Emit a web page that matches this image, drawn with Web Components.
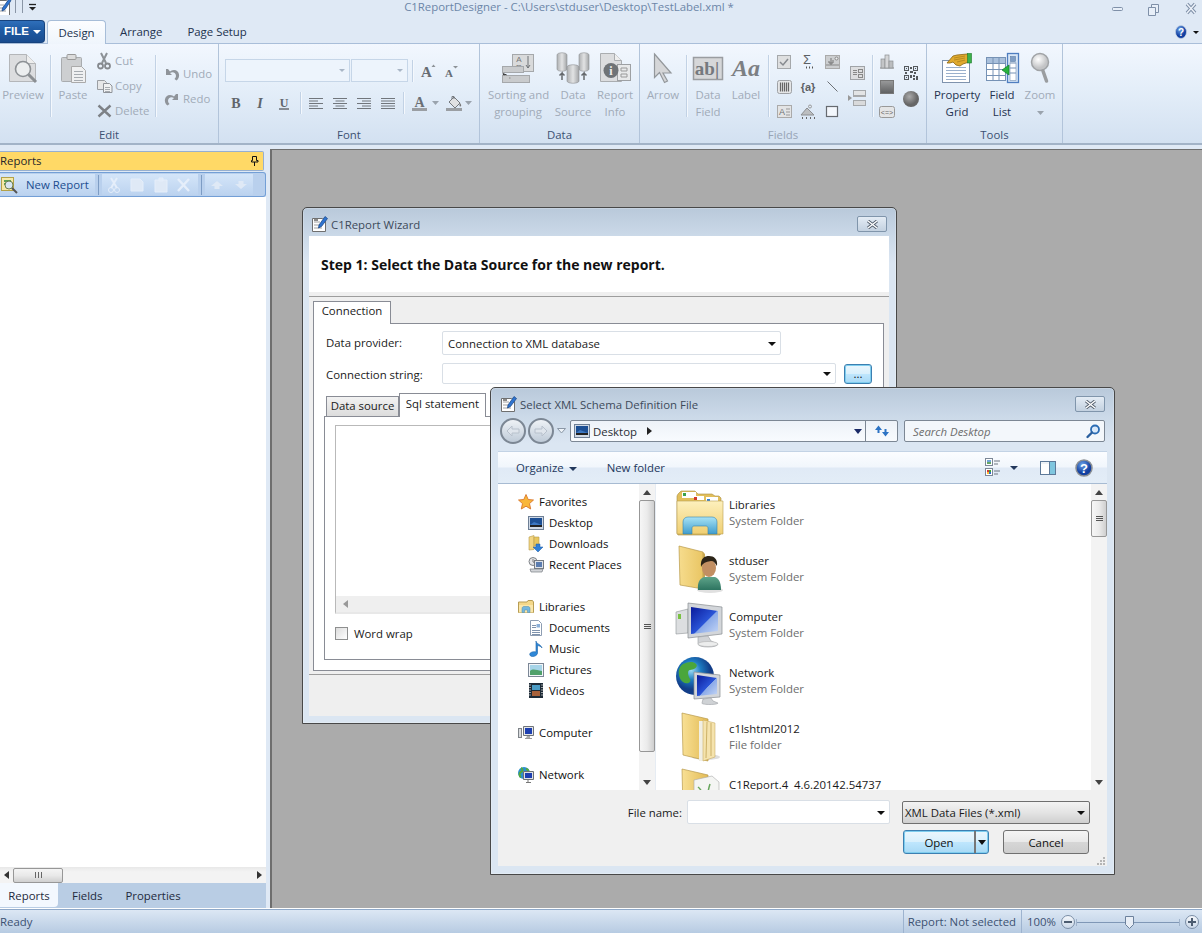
<!doctype html>
<html><head><meta charset="utf-8"><title>C1ReportDesigner</title>
<style>
html,body{margin:0;padding:0}
body{width:1202px;height:933px;overflow:hidden;background:#dfe9f5;font:11.4px/15px "Open Sans","Noto Sans",sans-serif;color:#1a1a1a}
</style></head><body>
<x-app>
  <x-titlebar>C1ReportDesigner - C:\Users\stduser\Desktop\TestLabel.xml *</x-titlebar>
  <x-tabrow></x-tabrow>
  <x-ribbon>
    <x-group w="219" label="Edit">
      <x-big w="46" icon="preview" dis>Preview</x-big>
      <x-sep style="margin-left:4px"></x-sep>
      <x-big w="44" icon="paste" dis>Paste</x-big>
      <x-col style="margin-left:2px;width:55px;margin-top:-2px">
        <x-small icon="cut" dis>Cut</x-small><x-small icon="copy" dis>Copy</x-small><x-small icon="del" dis>Delete</x-small>
      </x-col>
      <x-sep style="margin-left:3px"></x-sep>
      <x-col style="margin-left:9px;padding-top:11px">
        <x-small icon="undo" dis>Undo</x-small><x-small icon="redo" dis>Redo</x-small>
      </x-col>
    </x-group>
    <x-group w="261" label="Font">
      <x-fontgrid>
        <x-row style="height:23px;margin:14px 0 0 6px">
          <x-combo style="width:125px"></x-combo><x-combo style="width:57px;margin-left:1px"></x-combo>
          <x-sep style="margin-left:4px;height:22px;margin-top:0"></x-sep>
          <x-icon name="growa" style="margin-left:8px"></x-icon><x-icon name="shrinka" style="margin-left:9px"></x-icon>
        </x-row>
        <x-row style="height:20px;margin:11px 0 0 5px">
          <x-tool><x-icon name="b"></x-icon></x-tool><x-tool><x-icon name="i"></x-icon></x-tool><x-tool><x-icon name="u"></x-icon></x-tool>
          <x-sep style="margin-left:4px;height:22px;margin-top:0"></x-sep>
          <x-tool style="margin-left:3px"><x-icon name="al"></x-icon></x-tool><x-tool><x-icon name="ac"></x-icon></x-tool><x-tool><x-icon name="ar"></x-icon></x-tool><x-tool><x-icon name="aj"></x-icon></x-tool>
          <x-sep style="margin-left:3px;height:22px;margin-top:0"></x-sep>
          <x-icon name="colora" style="margin-left:8px"></x-icon><x-icon name="caret" style="margin-left:5px"></x-icon>
          <x-icon name="fill" style="margin-left:7px"></x-icon><x-icon name="caret" style="margin-left:3px"></x-icon>
        </x-row>
      </x-fontgrid>
    </x-group>
    <x-group w="160" label="Data">
      <x-big w="60" icon="sort" dis style="margin-left:8px">Sorting and<br>grouping</x-big>
      <x-big w="46" icon="db" dis style="margin-left:2px">Data<br>Source</x-big>
      <x-big w="38" icon="rinfo" dis>Report<br>Info</x-big>
    </x-group>
    <x-group w="287" label="Fields" dis>
      <x-big w="40" icon="arrow" dis style="margin-left:3px">Arrow</x-big>
      <x-sep style="margin-left:3px"></x-sep>
      <x-big w="42" icon="dfield" dis>Data<br>Field</x-big>
      <x-big w="34" icon="alabel" dis>Label</x-big>
      <x-sep style="margin-left:5px"></x-sep>
      <x-col style="width:24px;margin-left:3px;gap:4px;padding-top:1px"><x-cell><x-icon name="fcheck"></x-icon></x-cell><x-cell><x-icon name="fbar"></x-icon></x-cell><x-cell><x-icon name="ftext"></x-icon></x-cell></x-col>
      <x-col style="width:24px;gap:4px;padding-top:1px"><x-cell><x-icon name="fsum"></x-icon></x-cell><x-cell><x-icon name="fa"></x-icon></x-cell><x-cell><x-icon name="fmount"></x-icon></x-cell></x-col>
      <x-col style="width:24px;gap:4px;padding-top:1px"><x-cell><x-icon name="fpic"></x-icon></x-cell><x-cell><x-icon name="fline"></x-icon></x-cell><x-cell><x-icon name="frect"></x-icon></x-cell></x-col>
      <x-col style="width:24px;margin-left:1px;gap:4px;padding-top:12px"><x-cell><x-icon name="fform"></x-icon></x-cell><x-cell><x-icon name="flist"></x-icon></x-cell></x-col>
      <x-sep style="margin-left:3px"></x-sep>
      <x-col style="width:24px;margin-left:2px;gap:4px;padding-top:1px"><x-cell><x-icon name="fchart"></x-icon></x-cell><x-cell><x-icon name="fsq"></x-icon></x-cell><x-cell><x-icon name="fbox"></x-icon></x-cell></x-col>
      <x-col style="width:24px;gap:5px;padding-top:12px"><x-cell><x-icon name="fqr"></x-icon></x-cell><x-cell><x-icon name="fball"></x-icon></x-cell></x-col>
    </x-group>
    <x-group w="136" label="Tools">
      <x-big w="46" icon="propgrid" style="margin-left:7px">Property<br>Grid</x-big>
      <x-big w="40" icon="fieldlist" style="margin-left:2px">Field<br>List</x-big>
      <x-big w="40" icon="zoom" dis style="margin-left:-2px">Zoom<br><x-icon name="caret"></x-icon></x-big>
    </x-group>
  </x-ribbon>
  <x-main>
    <x-side>
      <x-paneltitle>Reports</x-paneltitle>
      <x-paneltool></x-paneltool>
      <x-blank></x-blank>
      <x-hscroll></x-hscroll>
      <x-panetabs></x-panetabs>
    </x-side>
    <x-desk>
      <x-window left="32" top="57" w="595" h="517" icon="app" title="C1Report Wizard">
        <x-wizard></x-wizard>
      </x-window>
      <x-window left="220" top="237" w="625" h="488" icon="app" title="Select XML Schema Definition File" pl="7" pb="8" pr="7">
        <x-navbar></x-navbar>
        <x-cmdbar></x-cmdbar>
        <x-browser></x-browser>
        <x-dlgfoot></x-dlgfoot>
      </x-window>
    </x-desk>
  </x-main>
  <x-status></x-status>
</x-app>
<script>
const lines=(x,y,w,n,s=3,c='#a6abb0')=>Array.from({length:n},(_,i)=>`<path d="M${x} ${y+i*s+.5}h${w}" stroke="${c}"/>`).join('');
const ICONS={
app:[17,17,`<path d="M1.5 2.5h10l3 3v10h-13z" fill="#fff" stroke="#6f6f6f"/><path d="M3 6h6M3 9h7M3 12h8" stroke="#a0a0a0"/><path d="M3 3h4v2H3z" fill="#8a8a8a"/><path d="M14 .5l2.5 2-6 8-3 1.5.5-3z" fill="#2f74d0" stroke="#14407f" stroke-width=".7"/>`],
preview:[30,30,`<path d="M1.5 1.5h17l9 9v18h-26z" fill="#dcdddf" stroke="#b4b6b9"/><path d="M18.5 1.5v9h9" fill="#eee" stroke="#b4b6b9"/><circle cx="15" cy="16" r="7.5" fill="#eceeef" stroke="#8d9195" stroke-width="1.6"/><path d="M20.5 21.500l7.500 7.500" stroke="#8b8f93" stroke-width="3"/>`],
paste:[27,30,`<rect x="1.500" y="4.500" width="20" height="24" rx="1" fill="#cdcfd1" stroke="#a9acaf"/><rect x="7" y="1.500" width="9" height="5" rx="1" fill="#dcdcdc" stroke="#999"/><path d="M11.500 13.500h10l4 4v12h-14z" fill="#eff0f1" stroke="#aaa"/>${lines(14,18,9,4,3)}`],
cut:[14,18,`<path d="M4 1l5 10M10 1L5 11" stroke="#8d9297" stroke-width="2"/><circle cx="3.500" cy="14" r="2.500" fill="none" stroke="#85898e" stroke-width="1.800"/><circle cx="10.500" cy="14" r="2.500" fill="none" stroke="#85898e" stroke-width="1.800"/>`],
copy:[16,14,`<path d="M.5 1.500h7l2 2v7h-9z" fill="#e6e7e8" stroke="#9a9ea3"/><path d="M6.500 4.500h6l2.500 2.500v6.500h-8.500z" fill="#f0f1f2" stroke="#8f9399"/>${lines(8,8,5,3,2)}`],
del:[15,14,`<path d="M1.500 1.500l12 11M13.500 1.500l-12 11" stroke="#7d8186" stroke-width="2.400"/>`],
undo:[14,14,`<path d="M1 2v6h6L5 6c3-2 6 0 6 3 0 1-.5 2-1.500 3l2 1.500c4.500-3 3-10.500-2.500-10.500-2 0-3 1-4 1.500L3 2z" fill="#8f949a"/>`],
redo:[14,14,`<path d="M13 2v6H7l2-2c-3-2-6 0-6 3 0 1 .5 2 1.500 3l-2 1.500c-4.500-3-3-10.500 2.500-10.500 2 0 3 1 4 1.500L11 2z" fill="#8f949a"/>`],
growa:[15,14,`<text x="0" y="13" font-family="Liberation Serif" font-weight="700" font-size="15" fill="#666c73">A</text><path d="M10.500 3l2-2.500 2 2.500z" fill="#8d9297"/>`],
shrinka:[13,12,`<text x="0" y="11.500" font-family="Liberation Serif" font-weight="700" font-size="11" fill="#666c73">A</text><path d="M8 1h5l-2.500 2.500z" fill="#8d9297"/>`],
b:[14,14,`<text x="7" y="12" text-anchor="middle" font-family="Liberation Serif" font-weight="700" font-size="14" fill="#60656b">B</text>`],
i:[14,14,`<text x="7" y="12" text-anchor="middle" font-family="Liberation Serif" font-style="italic" font-weight="700" font-size="14" fill="#60656b">I</text>`],
u:[14,14,`<text x="7" y="10.500" text-anchor="middle" font-family="Liberation Serif" font-weight="700" font-size="12" fill="#60656b">U</text><path d="M2 13h10" stroke="#60656b" stroke-width="1.400"/>`],
al:[14,11,[0,1,2,3,4].map(i=>`<path d="M0 ${i*2.500+.5}h${i%2?9:14}" stroke="#71767c"/>`).join('')],
ac:[14,11,[0,1,2,3,4].map(i=>`<path d="M${i%2?2.500:0} ${i*2.500+.5}h${i%2?9:14}" stroke="#71767c"/>`).join('')],
ar:[14,11,[0,1,2,3,4].map(i=>`<path d="M${i%2?5:0} ${i*2.500+.5}h${i%2?9:14}" stroke="#71767c"/>`).join('')],
aj:[14,11,[0,1,2,3,4].map(i=>`<path d="M0 ${i*2.500+.5}h14" stroke="#71767c"/>`).join('')],
colora:[15,15,`<text x="7.500" y="11" text-anchor="middle" font-family="Liberation Serif" font-weight="700" font-size="14" fill="#6a6f75">A</text><rect y="12" width="15" height="3" fill="#9a9ea3"/>`],
fill:[16,16,`<path d="M3 7l5-5 6 6-5 5z" fill="#dfe0e2" stroke="#75797e"/><path d="M6 4V1.500h2V4" fill="none" stroke="#75797e"/><path d="M14 8c1.500 2 1.500 3 .5 3.500S13 10 14 8z" fill="#777"/><rect y="13" width="16" height="3" fill="#9a9ea3"/>`],
caret:[7,4,`<path d="M0 0h7L3.500 4z" fill="#9aa3ad"/>`],
sort:[32,30,`<rect x="10.500" y="1.500" width="21" height="17" fill="#d9dadb" stroke="#a5a8ab"/><text x="17" y="9" text-anchor="middle" font-family="Liberation Sans" font-size="8" fill="#777">A</text><text x="17" y="17" text-anchor="middle" font-family="Liberation Sans" font-size="8" fill="#777">R</text><path d="M26 3v12M24 12l2 3 2-3" stroke="#6f7377" fill="none"/><rect x=".5" y="13.500" width="21" height="6" fill="#c9cbcd" stroke="#a5a8ab"/><rect x=".5" y="22.500" width="27" height="7" fill="#c9cbcd" stroke="#a5a8ab"/><path d="M1 20v2h4M7 25h2" stroke="#888" stroke-dasharray="1.500 1"/>`],
db:[32,32,`<defs><linearGradient id="d"><stop offset="0" stop-color="#aeb0b2"/><stop offset=".5" stop-color="#e2e3e4"/><stop offset="1" stop-color="#a3a5a7"/></linearGradient></defs><path d="M0 3c0-3 10-3 10 0v14c0 3-10 3-10 0z" fill="url(#d)" stroke="#8e9194" stroke-width=".6"/><path d="M22 3c0-3 10-3 10 0v14c0 3-10 3-10 0z" fill="url(#d)" stroke="#8e9194" stroke-width=".6"/><path d="M10 15c0-3 12-3 12 0v14c0 3-12 3-12 0z" fill="url(#d)" stroke="#8e9194" stroke-width=".6"/><path d="M5 28v-7l-2.500 2.500M5 21l2.500 2.500M27 28v-7l-2.500 2.500M27 21l2.500 2.500" stroke="#65696d" stroke-width="1.500" fill="none"/>`],
rinfo:[31,30,`<path d="M.5 .5h14l7 7v21H.5z" fill="#dcdddf" stroke="#aaadb0"/><path d="M14.500 .5v7h7" fill="#eee" stroke="#aaadb0"/><rect x="17.500" y="11.500" width="13" height="16" fill="#e8e9ea" stroke="#9da0a3"/><circle cx="11" cy="17.500" r="7.500" fill="#6f7377"/><text x="11" y="22" text-anchor="middle" font-family="Liberation Serif" font-weight="700" font-size="12" fill="#eee">i</text><path d="M21 15h6v3h-6zM21 21h6v3h-6z" fill="none" stroke="#999"/>`],
arrow:[20,30,`<path d="M1.500 1l16.500 19h-8l4.500 8-3 1.500-5-10-5 5z" fill="#d5d6d8" stroke="#93979b" stroke-width="1.200"/>`],
dfield:[30,23,`<rect x=".5" y=".5" width="29" height="22" fill="#d6d7d9" stroke="#9a9da1" stroke-width="1.500"/><text x="14" y="18" text-anchor="middle" font-family="Liberation Serif" font-weight="700" font-size="19" fill="#75797e">ab|</text>`],
alabel:[30,24,`<text x="15" y="20" text-anchor="middle" font-family="Liberation Serif" font-weight="700" font-style="italic" font-size="24" fill="#7c7f83">Aa</text>`],
fcheck:[14,14,`<rect x=".5" y=".5" width="13" height="13" fill="#dedfe0" stroke="#a5a8ab"/><path d="M3 7l3 3 5-6" fill="none" stroke="#868a8f" stroke-width="1.500"/>`],
fbar:[15,14,`<rect x=".5" y=".5" width="14" height="13" rx="2" fill="#e5e6e7" stroke="#9ea1a5"/><path d="M3.500 2.500v9M5.500 2.500v9M7.500 2.500v9M9.500 2.500v9M11.500 2.500v9" stroke="#666" stroke-width="1.200"/>`],
ftext:[15,13,`<rect x=".5" y=".5" width="14" height="12" fill="#e3e4e5" stroke="#aaa"/><text x="5" y="10" text-anchor="middle" font-family="Liberation Sans" font-size="9" fill="#6d7175">A</text><path d="M9 4h4M9 7h4M9 10h4" stroke="#999"/>`],
fsum:[14,15,`<text x="6" y="10" text-anchor="middle" font-family="Liberation Sans" font-size="13" fill="#5d6165">Σ</text><path d="M5 13.500h1M8 13.500h1M11 13.500h1" stroke="#555" stroke-width="2"/>`],
fa:[16,13,`<text x="8" y="10.500" text-anchor="middle" font-family="Liberation Sans" font-weight="700" font-size="11" fill="#5d6165">{a}</text>`],
fmount:[15,15,`<circle cx="9" cy="2.500" r="1.500" fill="none" stroke="#999"/><path d="M0 11l6-7 5 5 2 2z" fill="#bcbec0" stroke="#8d8f92"/><path d="M1 14h1M5 14h1M9 14h1M13 14h1" stroke="#666" stroke-width="2"/>`],
fpic:[15,14,`<rect x=".5" y=".5" width="14" height="13" fill="#ccced0" stroke="#aaa"/><path d="M1 10h13" stroke="#888"/><path d="M6 10V3M4 6v2h4V5" stroke="#777" fill="none"/><circle cx="11.500" cy="3.500" r="1.500" fill="#eee" stroke="#888"/>`],
fline:[11,11,`<path d="M.5 .5l10 10" stroke="#6c7075"/>`],
frect:[12,11,`<rect x=".5" y=".5" width="11" height="10" fill="#f3f7fc" stroke="#666a70" stroke-width="1.200"/>`],
fform:[15,14,`<rect x=".5" y=".5" width="14" height="13" fill="#dddee0" stroke="#a0a3a7"/>${lines(3,4,4,3,2,'#888')}<rect x="8.500" y="3.500" width="4" height="3" fill="none" stroke="#888"/><rect x="8.500" y="8.500" width="4" height="3" fill="none" stroke="#888"/>`],
flist:[18,16,`<rect x="5.500" y=".5" width="12" height="5" fill="#e3e4e5" stroke="#a5a8ab"/><path d="M5 6.500h13" stroke="#aaa"/><rect x="5.500" y="10.500" width="12" height="5" fill="#d9dadb" stroke="#a5a8ab"/><path d="M0 5l4 3-4 3z" fill="#999"/>`],
fchart:[16,15,`<path d="M1 14h14" stroke="#888"/><rect x="2" y="5" width="4" height="9" fill="#c3c5c7" stroke="#8c8f92" stroke-width=".7"/><rect x="6" y="1" width="4" height="13" fill="#d5d6d8" stroke="#8c8f92" stroke-width=".7"/><rect x="10" y="7" width="4" height="7" fill="#bbbdbf" stroke="#8c8f92" stroke-width=".7"/>`],
fsq:[14,14,`<defs><linearGradient id="s" x2="0" y2="1"><stop offset="0" stop-color="#9a9b9c"/><stop offset="1" stop-color="#5f6061"/></linearGradient></defs><rect x=".5" y=".5" width="13" height="13" fill="url(#s)" stroke="#777"/>`],
fbox:[16,12,`<rect x=".5" y=".5" width="15" height="11" rx="2" fill="#e4e5e6" stroke="#999"/><text x="8" y="8.500" text-anchor="middle" font-family="Liberation Sans" font-size="7" fill="#666">&lt;=&gt;</text>`],
fqr:[14,14,`<path fill="#55595d" d="M0 0h5v5H0zM9 0h5v5H9zM0 9h5v5H0zM6 1h2v2H6zM6 5h3v2H6zM10 6h2v2h-2zM1 6h2v2H1zM6 9h2v3H6zM9 9h2v2H9zM12 10h2v4h-2zM9 12h2v2H9z"/><path fill="#dfe9f5" d="M1 1h3v3H1zM10 1h3v3h-3zM1 10h3v3H1z"/><path fill="#55595d" d="M2 2h1v1H2zM11 2h1v1h-1zM2 11h1v1H2z"/>`],
fball:[16,16,`<defs><radialGradient id="b" cx=".4" cy=".35"><stop offset="0" stop-color="#aaa"/><stop offset="1" stop-color="#666"/></radialGradient></defs><circle cx="8" cy="8" r="8" fill="url(#b)"/>`],
propgrid:[30,30,`<rect x=".5" y="7.500" width="27" height="22" fill="#fff" stroke="#7f93ad"/>${lines(4,14,20,5,3,'#9ab0cc')}<path d="M5 10l6-7 4-1 10-1 2 2v6l-6 2-3 2-4-1-3-3-3 1z" fill="#e0aa2e" stroke="#8a6510" stroke-width=".8"/><path d="M12 5l11-2M12 7l11-2M15 9l8-2" stroke="#a67c18" stroke-width=".7"/><rect x="25.500" y=".5" width="4" height="9.500" fill="#3bb14a" stroke="#1d7a2b" stroke-width=".6"/>`],
fieldlist:[33,30,`<rect x=".5" y="4.500" width="19" height="23" fill="#fff" stroke="#7692b5"/><rect x="1" y="5" width="18" height="5" fill="#a9c0dc"/><path d="M7 5v23M13 5v23M1 10.500h18M1 16.500h18M1 22.500h18" stroke="#7692b5"/><rect x="21.500" y=".5" width="11" height="29" fill="#d8e6f6" stroke="#4f7ec0" stroke-width="1.300"/><rect x="24.500" y="3.500" width="5" height="5" fill="#7f9dc4" stroke="#55749c" stroke-width=".5"/><path d="M24 9.500v18h6v-18" fill="#fff" stroke="#7692b5" stroke-width=".6"/><path d="M24 10h6M24 15h6M24 20h6" stroke="#7692b5"/><path d="M16 17l7-5v10z" fill="#28b33c" stroke="#13802a" stroke-width=".7"/>`],
zoom:[19,30,`<defs><radialGradient id="z" cx=".4" cy=".35"><stop offset="0" stop-color="#fff"/><stop offset="1" stop-color="#c3c4c6"/></radialGradient></defs><ellipse cx="9" cy="9" rx="8.500" ry="8.500" fill="url(#z)" stroke="#a0a3a6" stroke-width="1.500"/><path d="M12 18l3.500 10" stroke="#9a9da0" stroke-width="3.500" stroke-linecap="round"/>`],
star:[16,16,`<path d="M8 .5l2.200 5 5.300.5-4 3.600 1.200 5.400L8 12.200 3.300 15l1.200-5.400-4-3.600 5.300-.5z" fill="#f9b73a" stroke="#d9762a" stroke-width=".9"/>`],
desktop:[16,14,`<rect x=".5" y=".5" width="15" height="13" fill="#cfd9e6" stroke="#6e7f95"/><rect x="2" y="2" width="12" height="9" fill="#1c4f94"/><rect x="2" y="9" width="12" height="2" fill="#222"/><path d="M2 9l4-3 8 3z" fill="#3c77c2"/>`],
downloads:[16,17,`<path d="M1 2l5-1.500v14L1 15z" fill="#f2d583" stroke="#b59a4c" stroke-width=".6"/><path d="M6 2h5v9H6z" fill="#e8c65e" stroke="#b59a4c" stroke-width=".6"/><path d="M8 9h4v3h3l-5 5-5-5h3z" fill="#2f7fd6" stroke="#1c5aa3" stroke-width=".5"/>`],
recent:[16,16,`<circle cx="5" cy="4.500" r="4" fill="#e3e4e6" stroke="#7f8388"/><path d="M5 2v3l2 1" stroke="#555" fill="none" stroke-width=".7"/><rect x="6.500" y="3.500" width="9" height="8" fill="#dfe3e8" stroke="#767b82"/><rect x="8" y="5" width="6" height="5" fill="#5b7db0"/><path d="M2 12h13l-1 3H3z" fill="#d2d4d8" stroke="#7a7e84" stroke-width=".7"/>`],
libsmall:[16,15,`<path d="M.5 3v10.500h15V3l-1-1.500H10L9 3z" fill="#f4d88a" stroke="#b79d54"/><path d="M1 6h14v7.500H1z" fill="#fbe7aa"/><path d="M4 13.500V10c0-2 1-2.500 2-2.500h4c1 0 2 .5 2 2.500v3.500h-2.500V11h-3v2.500z" fill="#74b7de" stroke="#4b8ab0" stroke-width=".5"/>`],
docs:[14,16,`<path d="M1.500 .5h8l3 3v12h-11z" fill="#fff" stroke="#8d9db2"/>${lines(3,5,4,2,2,'#7f93ad')}${lines(3,10,8,3,2,'#7f93ad')}<rect x="7.500" y="4" width="3.500" height="3.500" fill="#8cb0d8"/>`],
music:[14,17,`<path d="M7 1c0 3 5 3 6 7-1-2-3-2-4.500-2.500V13c0 2-2.500 3.500-5 3.500S-.500 14 2 12.500c1.500-1 3.500-1 5-.5z" fill="#2f88d8" stroke="#1a61a8" stroke-width=".6"/>`],
pictures:[16,14,`<rect x=".5" y=".5" width="15" height="13" fill="#f2f5f8" stroke="#7c8796"/><rect x="2" y="2" width="12" height="10" fill="#a6d4e8"/><path d="M2 8c3-3 6-1 12 0v4H2z" fill="#4fa06a"/>`],
videos:[14,15,`<rect width="14" height="15" fill="#1d2a36"/><rect x="3" y="2" width="8" height="5" fill="#4a9bc4"/><rect x="3" y="8" width="8" height="5" fill="#a8613a"/><path d="M1 1.500v12M13 1.500v12" stroke="#ddd" stroke-dasharray="1 1.500" stroke-width="1.300"/>`],
computer:[16,15,`<rect x=".5" y="3.500" width="3" height="9" fill="#d9dbde" stroke="#7e8388"/><path d="M5.500 1.500h10v9h-10z" fill="#e3e5e8" stroke="#6e7379"/><rect x="7" y="3" width="7" height="6" fill="#1d3fb0"/><path d="M9 11h3v2H8z" fill="#aaa"/><path d="M7 13.500h7" stroke="#999"/>`],
network:[16,16,`<circle cx="6" cy="6" r="6" fill="#2d8fce"/><path d="M3 1c2 1 2 3 0 4S1 9 3 10M8 2c2 0 3 2 2 4" stroke="#53a83f" stroke-width="2" fill="none"/><path d="M5.500 4.500h10v8h-10z" fill="#dfe2e6" stroke="#6b7076"/><rect x="7" y="6" width="7" height="5" fill="#1d3fb0"/><path d="M10 13v2M8 15.500h5" stroke="#777"/>`],
big_lib:[48,48,`<defs><linearGradient id="y" x2="0" y2="1"><stop offset="0" stop-color="#fdf0bd"/><stop offset="1" stop-color="#f0cf72"/></linearGradient><linearGradient id="bl" x2="0" y2="1"><stop offset="0" stop-color="#a8e3f5"/><stop offset="1" stop-color="#3f9ccd"/></linearGradient></defs><path d="M2 5l3-3h14l3 3h14l3 2h4l2 2v35l-1 2H2l-1-2V7z" fill="#e2bf5c" stroke="#a98f45" stroke-width=".6"/><rect x="6" y="3" width="14" height="6" fill="#fff"/><rect x="7" y="4" width="3" height="3" fill="#3aa24a"/><rect x="18" y="7" width="10" height="4" fill="#fff"/><rect x="18" y="8" width="3" height="3" fill="#d23a2a"/><rect x="30" y="8" width="12" height="6" fill="#fff"/><rect x="31" y="10" width="3" height="3" fill="#2f7fd6"/><path d="M1 12h46v33H1z" fill="url(#y)" stroke="#b89d52" stroke-width=".6"/><path d="M7 45V33c0-3 2-5 5-5h24c3 0 5 2 5 5v12H32v-6c0-1-1-2-2-2H18c-1 0-2 1-2 2v6z" fill="url(#bl)" stroke="#3b84ad" stroke-width=".6"/>`],
big_user:[48,48,`<defs><linearGradient id="y"><stop offset="0" stop-color="#f6dc8d"/><stop offset="1" stop-color="#e9c563"/></linearGradient><linearGradient id="g" x2="0" y2="1"><stop offset="0" stop-color="#5ea389"/><stop offset="1" stop-color="#2d7460"/></linearGradient></defs><path d="M3 1l24 6v37L4 40z" fill="url(#y)" stroke="#b8994a" stroke-width=".7"/><path d="M27 7l2 2v35h-2z" fill="#c7a651"/><ellipse cx="34" cy="45" rx="13" ry="3" fill="#ccc" opacity=".6"/><path d="M22 45c-1-9 3-12 6-13h11c3 1 6 4 6 13z" fill="url(#g)"/><ellipse cx="33" cy="23" rx="7" ry="9" fill="#c28f62"/><path d="M25 22c-1-9 4-11 8-11 5 0 9 3 8 10-2-3-3-5-6-5-3 1-7 0-10 6z" fill="#2c2418"/>`],
big_comp:[48,48,`<defs><linearGradient id="s" x1="0" y1="0" x2="1" y2="1"><stop offset="0" stop-color="#0a1a9a"/><stop offset=".55" stop-color="#2a55d8"/><stop offset=".56" stop-color="#8aa9e8"/><stop offset="1" stop-color="#c4d6f5"/></linearGradient></defs><path d="M0 11l12-3v24l-12 1z" fill="#dcdee0" stroke="#8f9397" stroke-width=".6"/><rect x="2" y="13" width="3" height="5" fill="#7ac142"/><path d="M12 2l34 4v27l-34 4z" fill="#d3d6da" stroke="#888c91" stroke-width=".7"/><path d="M15 6l27 4v20l-27 3z" fill="url(#s)"/><path d="M22 36l10-1 3 5 7 3c0 4-20 4-20 0z" fill="#d1d3d6" stroke="#9a9ea2" stroke-width=".6"/><ellipse cx="32" cy="43" rx="10" ry="2.500" fill="#eceded" stroke="#aaa" stroke-width=".5"/>`],
big_net:[48,48,`<defs><radialGradient id="g" cx=".4" cy=".35"><stop offset="0" stop-color="#9cdcf2"/><stop offset=".5" stop-color="#1d7cc2"/><stop offset="1" stop-color="#123d88"/></radialGradient><linearGradient id="s" x1="0" y1="0" x2="1" y2="1"><stop offset="0" stop-color="#0a1a9a"/><stop offset=".55" stop-color="#2a55d8"/><stop offset=".56" stop-color="#8aa9e8"/><stop offset="1" stop-color="#c4d6f5"/></linearGradient></defs><circle cx="19" cy="19" r="19" fill="url(#g)"/><path d="M7 7c5-2 10-3 13 0s-3 6-6 6-2 6 0 9-3 6-7 3S0 12 7 7zM22 28c3-2 5 0 4 3s-4 5-6 4 0-5 2-7z" fill="#4aa63c"/><path d="M18 15l26 3v22l-26 2z" fill="#d3d6da" stroke="#888c91" stroke-width=".7"/><path d="M21 18l20 3v16l-20 2z" fill="url(#s)"/><path d="M27 42l8-1 2 3 5 2c0 2-17 2-16 0z" fill="#cfd2d5" stroke="#9a9ea2" stroke-width=".6"/>`],
big_folder:[48,48,`<defs><linearGradient id="y"><stop offset="0" stop-color="#f8e095"/><stop offset="1" stop-color="#e3bb55"/></linearGradient></defs><ellipse cx="30" cy="44" rx="14" ry="3" fill="#ddd"/><path d="M6 0l26 6v42L7 42z" fill="url(#y)" stroke="#b8994a" stroke-width=".7"/><path d="M23 8h4v40h-4z" fill="#f1efe4"/><path d="M27 7l12 3v34l-12 4z" fill="#f5e3ad" stroke="#c0a355" stroke-width=".5"/><path d="M31 9l-1 36M35 10v33" stroke="#c0a355" stroke-width=".8"/>`],
big_folder2:[48,48,`<defs><linearGradient id="y"><stop offset="0" stop-color="#f8e095"/><stop offset="1" stop-color="#e3bb55"/></linearGradient></defs><path d="M6 0l26 6v42L7 42z" fill="url(#y)" stroke="#b8994a" stroke-width=".7"/><path d="M18 11l18-4 7 6v24l-25 6z" fill="#f4f5f3" stroke="#aaa" stroke-width=".6"/><path d="M22 18c4 3 6 8 8 18M34 15c-2 6-3 12-2 20" stroke="#67a65c" stroke-width="1.500" fill="none"/>`],
search:[14,15,`<circle cx="9" cy="5.500" r="4" fill="#dbeafa" stroke="#2a6cb4" stroke-width="1.800"/><path d="M6 8.500L1.500 13" stroke="#2a5f9e" stroke-width="2.400" stroke-linecap="round"/>`],
views:[16,20,`<rect x=".5" y=".5" width="7" height="7" fill="#fff" stroke="#7c8796"/><rect x="2" y="2" width="4" height="2" fill="#70a5d8"/><rect x="2" y="4" width="4" height="2" fill="#63a566"/><rect x=".5" y="10.500" width="7" height="7" fill="#fff" stroke="#7c8796"/><path d="M2 12h2v2H2z" fill="#d33"/><path d="M4 12h2v2H4z" fill="#3a3"/><path d="M2 14h2v2H2z" fill="#fb3"/><path d="M4 14h2v2H4z" fill="#36c"/><path d="M9 3h6M9 6h4M9 13h6M9 16h4" stroke="#6f7782" stroke-width="1.200"/>`],
panes:[16,14,`<rect x=".5" y=".5" width="15" height="13" fill="#fff" stroke="#5d7999"/><rect x="10" y="1" width="5" height="12" fill="#7fc6df"/><path d="M9.500 1v12" stroke="#5d7999"/><path d="M1 1h8v2H1z" fill="#eef2f6"/>`],
help:[18,18,`<defs><radialGradient id="h" cx=".4" cy=".3"><stop offset="0" stop-color="#6da4e8"/><stop offset="1" stop-color="#123fa0"/></radialGradient></defs><circle cx="9" cy="9" r="8" fill="url(#h)" stroke="#8b8f94" stroke-width="1.500"/><text x="9" y="13.500" text-anchor="middle" font-family="Liberation Sans" font-weight="700" font-size="13" fill="#fff">?</text>`],
helps:[12,14,`<defs><radialGradient id="h" cx=".4" cy=".3"><stop offset="0" stop-color="#6da4e8"/><stop offset="1" stop-color="#123fa0"/></radialGradient></defs><ellipse cx="6" cy="7" rx="5.500" ry="6.500" fill="url(#h)" stroke="#c6d2e4" stroke-width=".7"/><text x="6" y="11" text-anchor="middle" font-family="Liberation Sans" font-weight="700" font-size="10" fill="#fff">?</text>`],
newrep:[17,16,`<rect x=".5" y=".5" width="12" height="13" fill="#f6e9a8" stroke="#b3a149"/><path d="M3 4h7M3 7h5" stroke="#2e8a3a" stroke-width="1.400"/><circle cx="8" cy="8" r="4" fill="#d8e6f2" stroke="#6b7f50"/><path d="M11 11l5 5" stroke="#555" stroke-width="2"/>`],
refresh:[16,14,`<path d="M1 6l3.500-4.500L8 6H5.500v3h-2V6z" fill="#2c73c4"/><path d="M8 8l3.500 4.500L15 8h-2.500V5h-2v3z" fill="#2c73c4"/>`]
};
function el(name,css,html,init){
  customElements.define(name,class extends HTMLElement{
    constructor(){super();this.attachShadow({mode:'open'}).innerHTML=`<style>${css}</style>${html}`}
    connectedCallback(){if(init)init.call(this,this.shadowRoot)}
  });
}
el('x-icon',':host{display:inline-block;line-height:0;vertical-align:middle;flex:none}svg{display:block;overflow:visible}','',function(r){
  const I=ICONS[this.getAttribute('name')];
  if(!I||r.querySelector('svg'))return;
  r.innerHTML+=`<svg xmlns="http://www.w3.org/2000/svg" width="${I[0]}" height="${I[1]}" viewBox="0 0 ${I[0]} ${I[1]}">${I[2]}</svg>`;
});
const ic=n=>`<x-icon name="${n}"></x-icon>`;
el('x-app',':host{display:flex;flex-direction:column;width:1202px;height:933px;overflow:hidden}','<slot></slot>');
el('x-titlebar',`:host{display:flex;height:20px;align-items:flex-start;color:#6c86a8;font-size:11.4px}
.q{width:60px;display:flex;align-items:flex-start;height:15px;overflow:hidden;position:relative}
.t{flex:1;text-align:center;margin-top:-1px}
.c{width:124px;display:flex;padding:2px 0 0 33px;box-sizing:border-box}`,
`<div class="q"><svg width="40" height="15" style="flex:none"><g transform="translate(-5 -2)"><path d="M1.500 2.500h10l3 3v12h-13z" fill="#fff" stroke="#6f6f6f"/><path d="M3 7h6M3 10h7M3 13h8" stroke="#a0a0a0"/><path d="M14 1l2 1.500-6 9-3 1.500.5-3z" fill="#2f74d0" stroke="#14407f" stroke-width=".7"/></g><path d="M15.500 0v13M22.500 0v13" stroke="#8a96a6"/><path d="M29 4.500h7" stroke="#222" stroke-width="1.300"/><path d="M29 7h7l-3.500 3.500z" fill="#222"/></svg></div>
<div class="t"><slot></slot></div>
<div class="c"><svg width="91" height="15"><rect x="1.500" y="5.500" width="10" height="3" rx="1" fill="#e8eff8" stroke="#7f90a8"/><path d="M37.500 5.500h7v8h-7zM40.500 5.500v-3h7v8h-3" fill="#e8eff8" stroke="#7f90a8"/><path d="M76 2l8 9M84 2l-8 9" stroke="#7f90a8" stroke-width="3.400"/><path d="M76 2l8 9M84 2l-8 9" stroke="#eef3fa" stroke-width="1.400"/></svg></div>`);
el('x-tabrow',`:host{display:flex;height:24px;align-items:stretch;position:relative;z-index:1;color:#22324e;font-size:11.4px}
.f{width:45px;box-sizing:border-box;height:23px;background:linear-gradient(#2f6fba,#1e5aa3 45%,#1a4c8e);border:1px solid #17437e;border-left:0;border-radius:0 4px 4px 0;color:#fff;font-weight:700;font-family:"Liberation Sans",sans-serif;font-size:11.5px;display:flex;align-items:center;padding-left:4px;gap:4px}
.f i{border:4px solid transparent;border-top-color:#fff;border-bottom:0;width:0;height:0}
.d{margin-left:2px;width:59px;box-sizing:border-box;background:linear-gradient(#fcfdff,#eff5fc);border:1px solid #a7bdd8;border-bottom:0;border-radius:4px 4px 0 0;text-align:center;line-height:24px}
.n{margin-left:14px;line-height:24px}
.h{margin-left:auto;display:flex;align-items:center;gap:4px;padding:0 3px 0 0}
.h b{border:3px solid transparent;border-top-color:#111;border-bottom:0;width:0;height:0;margin-left:2px}`,
`<div class="f">FILE<i></i></div><div class="d">Design</div><div class="n">Arrange</div><div class="n" style="margin-left:25px">Page Setup</div><div class="h">${ic('helps')}<b></b></div>`);
el('x-ribbon',':host{display:flex;height:102px;box-sizing:border-box;background:linear-gradient(#f2f7fe,#e4eef9 45%,#d3e1f1);border-top:1px solid #a9bed9;border-bottom:2px solid #a2b3c7;margin-top:-1px}','<slot></slot>');
el('x-group',`:host{display:flex;flex-direction:column;box-sizing:border-box;border-right:1px solid #b2c4da;height:99px;flex:none}
.c{display:flex;height:76px;padding-top:6px;box-sizing:content-box;align-items:flex-start}
.l{text-align:center;height:17px;line-height:17px;color:#3c5172;margin-top:0}
:host([dis]) .l{color:#98a5b6}`,`<div class="c"><slot></slot></div><div class="l"></div>`,
function(r){this.style.width=this.getAttribute('w')+'px';r.querySelector('.l').textContent=this.getAttribute('label')});
el('x-big',`:host{display:block;text-align:center;flex:none;color:#24324f;line-height:17px}
:host([dis]){color:#a1abb8}
.i{height:36px;display:flex;align-items:center;justify-content:center}.t{white-space:nowrap}`,`<div class="i"></div><div class="t"><slot></slot></div>`,
function(r){this.style.width=this.getAttribute('w')+'px';r.querySelector('.i').innerHTML=ic(this.getAttribute('icon'))});
el('x-sep',':host{display:block;width:1px;height:62px;background:#c2d2e5;flex:none;margin-top:5px;box-shadow:1px 0 0 #f4f8fd}','');
el('x-col',':host{display:flex;flex-direction:column;flex:none}','<slot></slot>');
el('x-small',`:host{display:flex;align-items:center;height:25px;color:#24324f;flex:none}
:host([dis]){color:#a1abb8}.i{width:18px;display:flex;justify-content:flex-start}`,`<div class="i"></div><slot></slot>`,
function(r){r.querySelector('.i').innerHTML=ic(this.getAttribute('icon'))});
el('x-fontgrid',':host{display:block;margin-top:-5px}','<slot></slot>');
el('x-row',':host{display:flex;align-items:center}','<slot></slot>');
el('x-combo',`:host{display:flex;height:23px;box-sizing:border-box;background:#edf4fc;border:1px solid #c6d6e8;align-items:center;justify-content:flex-end;padding-right:4px;flex:none}
i{border:3.500px solid transparent;border-top-color:#a9b6c6;border-bottom:0;width:0;height:0}`,'<i></i>');
el('x-tool',':host{display:flex;width:24px;justify-content:center;align-items:center;flex:none}','<slot></slot>');
el('x-cell',':host{display:flex;height:21px;align-items:center;justify-content:center}','<slot></slot>');
el('x-main',':host{display:flex;flex:1;min-height:0}','<slot></slot>');
el('x-side',':host{display:flex;flex-direction:column;width:270px;flex:none;box-sizing:border-box;padding:6px 4px 0 0;background:#dfe9f5}','<slot></slot>');
el('x-paneltitle',`:host{display:flex;height:20px;box-sizing:border-box;align-items:center;justify-content:space-between;margin-right:2px;background:#ffd966;border:1px solid #96afd0;border-left:0;border-radius:0 2px 2px 0;color:#26262a;padding:0 4px 2px 0}`,
`<slot></slot><svg width="9" height="11"><path d="M2.500 1.500h4v4h1.500v1.500h-6.500v-1.500h1zM4.500 7v4" stroke="#111" fill="none"/></svg>`);
el('x-paneltool',`:host{display:flex;height:25px;box-sizing:border-box;margin-top:1px;align-items:center;background:#b9d0ed;border:1px solid #739fd6;border-left:0;border-radius:0 3px 3px 0;color:#214d90}
.a{height:21px;display:flex;align-items:center;background:linear-gradient(#d4e5f9,#bcd3ef)}
.s{width:1px;height:20px;background:#7d9cc4;margin:0 3px}`,
`<div class="a" style="width:95px;padding-left:1px;box-sizing:border-box">${ic('newrep')}<span style="margin-left:8px">New Report</span></div><div class="s"></div>
<div class="a" style="width:96px"><svg width="96" height="20"><g stroke="#e5eefa" fill="#dfe9f6"><path d="M9 3l6 10M15 3L9 13" stroke-width="2" fill="none"/><circle cx="9" cy="15" r="2.500" fill="none"/><circle cx="15" cy="15" r="2.500" fill="none"/><path d="M29 4h9l3 3v9H29zM53 5h12v12H53zM57 3h4v3h-4z"/><path d="M76 4l11 12M87 4L76 16" stroke-width="2.400"/></g></svg></div><div class="s"></div>
<div class="a" style="width:48px"><svg width="48" height="20"><path d="M6 11l6-5 6 5h-3.500v3h-5v-3zM30 9l6 5 6-5h-3.500V6h-5v3z" fill="#dfe9f6"/></svg></div>`);
el('x-blank',':host{display:block;flex:1;background:#fff}','');
el('x-hscroll',`:host{display:flex;height:16px;background:linear-gradient(#e8e8e8,#f3f3f3 30%,#f3f3f3);align-items:center;flex:none}
.l,.r{width:13px;display:flex;justify-content:center}.t{width:50px;height:15px;box-sizing:border-box;border:1px solid #979797;border-radius:2px;background:linear-gradient(#f4f4f4,#e9e9e9 50%,#cfcfcf);display:flex;justify-content:center;align-items:center}.m{flex:1}
.t i{width:1px;height:6px;background:#666;margin:0 1px;display:block}`,
`<div class="l"><svg width="5" height="8"><path d="M5 0v8L0 4z" fill="#333"/></svg></div><div class="t"><i></i><i></i><i></i></div><div class="m"></div><div class="r"><svg width="5" height="8"><path d="M0 0v8l5-4z" fill="#333"/></svg></div>`);
el('x-panetabs',`:host{display:flex;height:25px;background:#b9cde4;color:#1e2a3c;line-height:26px;flex:none}
.a{width:58px;height:24px;background:#f3f8fe;border-radius:0 0 4px 0;text-align:center;box-sizing:border-box}
.b{margin-left:14px}`,`<div class="a">Reports</div><div class="b">Fields</div><div class="b" style="margin-left:23px">Properties</div>`);
el('x-desk',':host{display:block;flex:1;position:relative;background:#ababab;border-top:1px solid #6e6e6e;border-left:2px solid #6e6e6e;box-sizing:border-box;margin-top:4px}','<slot></slot>');
el('x-window',`:host{display:flex;flex-direction:column;position:absolute;box-sizing:border-box;border:1px solid #484848;border-radius:5px 5px 0 0;background:linear-gradient(#b9c9da,#cbd9e8 28px,#dbe6f2 55px);box-shadow:0 0 0 1px rgba(255,255,255,.2) inset}
.h{height:28px;display:flex;align-items:center;padding:4px 0 0 2px;color:#3d4a5a;flex:none;box-sizing:border-box}
.n{margin-left:3px;white-space:nowrap}
.x{margin-left:auto;width:30px;height:16px;box-sizing:border-box;border:1px solid #8095ab;border-radius:2px;background:linear-gradient(#e4ecf5,#c3d1e0);display:flex;align-items:center;justify-content:center;margin-right:2px}`,
`<div class="h"><span class="i"></span><span class="n"></span><span class="x"><svg width="11" height="9"><path d="M1 1l9 7M10 1l-9 7" stroke="#55606e" stroke-width="3.200"/><path d="M1 1l9 7M10 1l-9 7" stroke="#fff" stroke-width="1.400"/></svg></span></div><slot></slot>`,
function(r){const a=k=>this.getAttribute(k);Object.assign(this.style,{left:(+a('left')-2)+'px',top:a('top')+'px',width:a('w')+'px',height:a('h')+'px',paddingLeft:(a('pl')||6)+'px',paddingRight:(a('pr')||7)+'px',paddingBottom:(a('pb')||7)+'px'});
r.querySelector('.i').innerHTML=ic(a('icon'));r.querySelector('.n').textContent=a('title');this.removeAttribute('title')});
el('x-select',`:host{display:flex;align-items:center;box-sizing:border-box;background:#fff;border:1px solid #d9dfe6;border-radius:2px;padding:0 4px 0 5px;flex:none}
:host([gray]){background:linear-gradient(#f3f3f3,#e4e4e4 50%,#cfcfcf);border:1px solid #6f6f6f}
s{margin-left:auto;border:4px solid transparent;border-top:4.500px solid #111;border-bottom:0;width:0;height:0;margin-top:2px}`,`<slot></slot><s></s>`);
el('x-btn',`:host{display:flex;align-items:center;justify-content:center;box-sizing:border-box;border:1px solid #707070;border-radius:3px;background:linear-gradient(#f4f4f4,#e9e9e9 48%,#d6d6d6 52%,#cdcdcd);flex:none;color:#111}
:host([def]){border:1px solid #3c7fb1;box-shadow:inset 0 0 0 1px #7ecdee;background:linear-gradient(#eaf6fd,#d9f0fc 48%,#bee6fd 52%,#a7d9f5)}`,'<slot></slot>');
el('x-wizard',`:host{display:flex;flex-direction:column;flex:1;background:#efefef;min-height:0}
.hd{height:56px;background:#fff;display:flex;align-items:center;padding-left:12px;font-weight:700;font-size:14px;color:#111;flex:none;box-sizing:border-box}
.ln{height:1px;background:#9d9d9d;margin-top:4px;flex:none}
.tabs{height:26px;display:flex;align-items:flex-end;padding-left:4px;flex:none}
.tab{width:78px;height:23px;box-sizing:border-box;background:#fff;border:1px solid #898c95;border-bottom:0;text-align:center;line-height:18px;position:relative;z-index:1;margin-bottom:-1px}
.pan{flex:none;height:348px;margin:0 5px 0 4px;background:#fff;border:1px solid #898c95;padding:7px 11px 0 10px;box-sizing:border-box;position:relative}
.rw{display:flex;align-items:center}
.lb{width:118px;padding-left:2px;box-sizing:border-box;flex:none}
.it{display:flex;align-items:flex-end;height:22px;margin-top:10px;padding-left:2px}
.it div{box-sizing:border-box;border:1px solid #898c95;text-align:center}
.a{width:73px;height:20px;background:linear-gradient(#f2f2f2,#dcdcdc);border-bottom:0!important;line-height:17px}
.b{width:87px;height:24px;background:#fff;border-bottom:0!important;margin-bottom:-1px;position:relative;z-index:1;line-height:20px}
.ip{height:244px;border:1px solid #898c95;width:570px;box-sizing:border-box;padding:8px 0 0 10px}
.tx{height:189px;border:1px solid #b9b9b9;border-right:0;border-bottom:2px solid #e8e8e8;box-sizing:border-box;display:flex;flex-direction:column;justify-content:flex-end}
.sb{height:16px;background:#efefef;padding-left:7px;display:flex;align-items:center}
.cb{display:flex;align-items:center;margin-top:12px}
.ck{width:13px;height:13px;box-sizing:border-box;border:1px solid #8e8f8f;background:linear-gradient(135deg,#dcdcdc,#fff);margin-right:6px}`,
`<div class="hd">Step 1: Select the Data Source for the new report.</div><div class="ln"></div>
<div class="tabs"><div class="tab">Connection</div></div>
<div class="pan">
  <div class="rw"><div class="lb" style="padding-bottom:2px">Data provider:</div><x-select style="width:339px;height:24px">Connection to XML database</x-select></div>
  <div class="rw" style="margin-top:7px"><div class="lb" style="padding-top:2px">Connection string:</div><x-select style="width:394px;height:21px"></x-select><x-btn def style="width:28px;height:20px;margin:2px 0 0 8px;line-height:20px">...</x-btn></div>
  <div class="it"><div class="a">Data source</div><div class="b">Sql statement</div></div>
  <div class="ip"><div class="tx"><div class="sb"><svg width="5" height="8"><path d="M5 0v8L0 4z" fill="#999"/></svg></div></div>
  <div class="cb"><div class="ck"></div>Word wrap</div></div>
</div>
<div style="height:3px;flex:none"></div><div style="height:1px;background:#9d9d9d;flex:none"></div>`);
el('x-navbar',`:host{display:flex;height:35px;align-items:flex-start;padding-top:4px;box-sizing:border-box;flex:none}
.ci{width:26px;height:26px;box-sizing:border-box;border-radius:50%;border:2px solid #7c8794;background:linear-gradient(#eef2f6,#bfcbd8);display:flex;align-items:center;justify-content:center;margin-top:-2px;flex:none}
.ad{margin-left:4px;width:328px;height:22px;box-sizing:border-box;border:1px solid #7c8794;border-radius:2px;background:linear-gradient(#edf2f8,#f8fbfe);display:flex;align-items:center;padding:0 0 0 3px;color:#2a2f36}
.se{margin-left:6px;width:201px;height:22px;box-sizing:border-box;border:1px solid #7c8794;border-radius:2px;background:#f3f7fb;display:flex;align-items:center;padding:0 4px 0 8px;font-style:italic;color:#6d6d6d;justify-content:space-between}
.rf{border-left:1px solid #7c8794;height:100%;width:31px;display:flex;align-items:center;justify-content:center}`,
`<div class="ci" style="margin-left:2px"><svg width="14" height="12"><path d="M1 6l5-5v3h7v4H6v3z" fill="#dfe5ec" stroke="#b8c1cc"/></svg></div>
<div class="ci" style="margin-left:2px"><svg width="14" height="12"><path d="M13 6L8 1v3H1v4h7v3z" fill="#dfe5ec" stroke="#b8c1cc"/></svg></div>
<svg width="9" height="6" style="margin:8px 0 0 3px;flex:none"><path d="M.5.5h8L4.500 5z" fill="#eef3f8" stroke="#8a97a6"/></svg>
<div class="ad">${ic('desktop')}<span style="margin-left:3px">Desktop</span><svg width="5" height="8" style="margin-left:10px"><path d="M0 0v8l5-4z" fill="#222"/></svg>
<svg width="8" height="5" style="margin-left:auto;margin-right:3px"><path d="M0 0h8L4 5z" fill="#1a2a66"/></svg><div class="rf">${ic('refresh')}</div></div>
<div class="se">Search Desktop${ic('search')}</div>`);
el('x-cmdbar',`:host{display:flex;height:33px;box-sizing:border-box;flex:none;align-items:center;border-top:1px solid #c3d3e5;border-bottom:1px solid #a7bbd2;background:linear-gradient(#fbfdff,#f1f6fc 48%,#e0eaf6 52%,#e3edf7);padding-left:18px;color:#23385c}
i{border:4px solid transparent;border-top:4.500px solid #23385c;border-bottom:0;width:0;height:0;display:inline-block;margin-left:5px;vertical-align:1px}`,
`<span>Organize<i></i></span><span style="margin-left:30px">New folder</span><span style="margin-left:320px;display:flex;align-items:center">${ic('views')}<i style="margin-left:9px"></i></span><span style="margin-left:22px">${ic('panes')}</span><span style="margin-left:19px">${ic('help')}</span>`);
el('x-vscroll',`:host{display:flex;flex-direction:column;width:16px;flex:none;background:#f3f3f3;height:306px;box-sizing:border-box;overflow:hidden}
.u{height:16px;display:flex;align-items:center;justify-content:center;flex:none}
.t{box-sizing:border-box;width:16px;border:1px solid #979797;border-radius:2px;background:linear-gradient(90deg,#f6f6f6,#ebebeb 50%,#cfcfcf);display:flex;flex-direction:column;justify-content:center;align-items:center;gap:1px;flex:none}
.t i{width:7px;height:1px;background:#555}.m{flex:1}`,
`<div class="u"><svg width="8" height="5"><path d="M4 0l4 5H0z" fill="#444"/></svg></div><div class="t"><i></i><i></i><i></i></div><div class="m"></div><div class="u"><svg width="8" height="5"><path d="M0 0h8L4 5z" fill="#444"/></svg></div>`,
function(r){r.querySelector('.t').style.height=this.getAttribute('thumb')+'px'});
el('x-nav',`:host{display:flex;align-items:center;height:21px;color:#111;white-space:nowrap}
:host([top]) .i{margin-left:20px}.i{margin-left:30px;width:16px;display:flex;justify-content:center;flex:none;margin-right:5px}`,`<div class="i"></div><slot></slot>`,
function(r){r.querySelector('.i').innerHTML=ic(this.getAttribute('icon'))});
el('x-file',`:host{display:flex;align-items:center;height:56px;padding-left:20px;flex:none}
:host([last]){align-items:flex-start;height:25px;overflow:hidden}
:host([last]) .i{margin-top:4px}
:host([last]) .t{line-height:8px;margin-top:16px}
.i{width:48px;height:48px;flex:none}.t{margin-left:5px;line-height:16px;white-space:nowrap}.s{color:#6d6d6d}`,
`<div class="i"></div><div class="t"><div><slot></slot></div><div class="s"></div></div>`,
function(r){r.querySelector('.i').innerHTML=ic(this.getAttribute('icon'));const s=r.querySelector('.s');if(this.hasAttribute('sub'))s.textContent=this.getAttribute('sub')});
el('x-browser',`:host{display:flex;height:306px;background:#fff;flex:none;overflow:hidden}
.nav{width:141px;padding-top:7px;box-sizing:border-box;flex:none;overflow:hidden}
.g{height:21px}.ls{flex:1;overflow:hidden;padding-top:1px;border-left:1px solid #e6ecf3;box-sizing:border-box}`,
`<div class="nav">
<x-nav top icon="star">Favorites</x-nav><x-nav icon="desktop">Desktop</x-nav><x-nav icon="downloads">Downloads</x-nav><x-nav icon="recent">Recent Places</x-nav><div class="g"></div>
<x-nav top icon="libsmall">Libraries</x-nav><x-nav icon="docs">Documents</x-nav><x-nav icon="music">Music</x-nav><x-nav icon="pictures">Pictures</x-nav><x-nav icon="videos">Videos</x-nav><div class="g"></div>
<x-nav top icon="computer">Computer</x-nav><div class="g"></div><x-nav top icon="network">Network</x-nav>
</div><x-vscroll thumb="252"></x-vscroll>
<div class="ls">
<x-file icon="big_lib" sub="System Folder">Libraries</x-file><x-file icon="big_user" sub="System Folder">stduser</x-file><x-file icon="big_comp" sub="System Folder">Computer</x-file><x-file icon="big_net" sub="System Folder">Network</x-file><x-file icon="big_folder" sub="File folder">c1lshtml2012</x-file><x-file icon="big_folder2" last>C1Report.4&nbsp; 4.6.20142.54737</x-file>
</div><x-vscroll thumb="37"></x-vscroll>`);
el('x-dlgfoot',`:host{display:flex;flex-direction:column;flex:1;background:#f0f0f0;position:relative;padding:10px 17px 0 0;box-sizing:border-box}
.r{display:flex;justify-content:flex-end;align-items:center}
.gr{position:absolute;right:2px;bottom:0;width:10px;height:10px}`,
`<div class="r" style="height:24px"><span style="margin-right:5px">File name:</span><x-select style="width:203px;height:24px"></x-select><x-select gray style="width:188px;height:23px;margin-left:12px;padding-left:2px">XML Data Files (*.xml)</x-select></div>
<div class="r" style="margin-top:6px;padding-right:1px"><x-btn def style="width:86px;height:24px"><span style="flex:1;text-align:center">Open</span><span style="width:2px;height:22px;background:#777"></span><span style="width:12px;display:flex;justify-content:center"><svg width="8" height="5" style="display:block"><path d="M0 0h8L4 5z" fill="#111"/></svg></span></x-btn><x-btn style="width:86px;height:24px;margin-left:14px">Cancel</x-btn></div>
<svg class="gr"><path d="M8 1h2v2H8zM5 4h2v2H5zM8 4h2v2H8zM2 7h2v2H2zM5 7h2v2H5zM8 7h2v2H8z" fill="#b5b5b5"/></svg>`);
el('x-status',`:host{display:flex;height:25px;flex:none;box-sizing:border-box;border-top:1px solid #fff;align-items:center;color:#3c5172;background:linear-gradient(#8fa9c9 0,#8fa9c9 1px,#dce7f4 1px,#b7cbe2);white-space:nowrap;padding-top:1px}
.s{width:1px;height:24px;background:#9db3cf}
.c{border-radius:50%;width:14px;height:14px;box-sizing:border-box;border:1px solid #7b8ea6;background:linear-gradient(#f4f7fb,#cbd8e8);display:flex;align-items:center;justify-content:center;flex:none}
.sl{width:110px;height:14px;flex:none}`,
`<span style="margin-right:auto">Ready</span><div class="s"></div><span style="margin:0 5px 0 4px">Report: Not selected</span><div class="s"></div><span style="margin:0 5px">100%</span>
<div class="c"><svg width="8" height="2"><path d="M0 1h8" stroke="#4c5c70" stroke-width="2"/></svg></div>
<div class="sl"><svg width="110" height="14"><path d="M1 7.500h104" stroke="#7f97b6"/><path d="M1.500 4v7M54.500 4v7M104.500 4v7" stroke="#9fb2ca"/><path d="M50.500 1.500h8v8l-4 4-4-4z" fill="#e8eef6" stroke="#6c819c"/></svg></div>
<div class="c" style="margin-right:3px"><svg width="8" height="8"><path d="M0 4h8M4 0v8" stroke="#4c5c70" stroke-width="2"/></svg></div>`);
</script>
</body></html>
